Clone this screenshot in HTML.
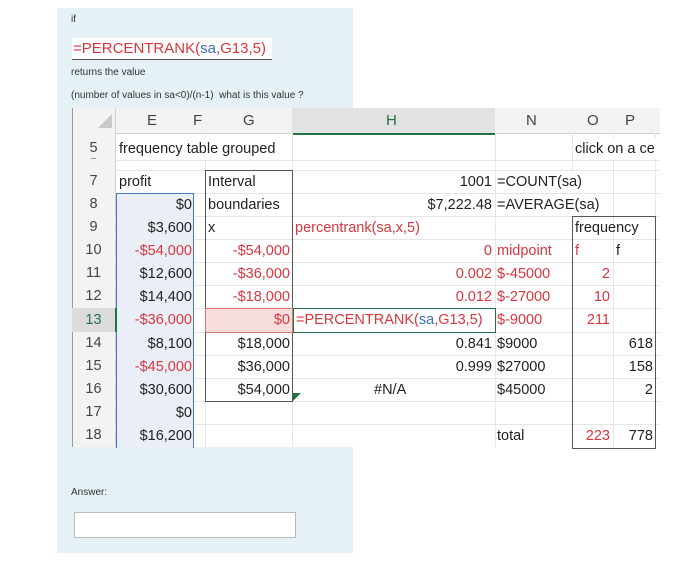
<!DOCTYPE html>
<html><head><meta charset="utf-8"><style>
body{margin:0;width:700px;height:565px;background:#fff;position:relative;overflow:hidden;font-family:"Liberation Sans",sans-serif}
.a{position:absolute;white-space:nowrap}
.c{position:absolute;font-size:14.5px;line-height:22px;color:#222;white-space:nowrap}
.w{background:#fff}
.r{color:#d9363e}
.b{color:#3b6fb6}
.h{position:absolute;height:1px;background:#e6e6e6}
.v{position:absolute;width:1px;background:#e6e6e6}
.rn{position:absolute;left:72px;width:43px;text-align:center;font-size:14.5px;line-height:23px;color:#444}
</style></head><body>
<div class="a" style="left:57px;top:8px;width:296px;height:545px;background:#e6f1f5"></div>
<div class="a" style="left:71px;top:14px;font-size:10px;color:#333">if</div>
<div class="a" style="left:72px;top:38px;width:200px;height:21px;background:#fff;border-bottom:1px solid #555"></div>
<div class="a" style="left:73px;top:38px;font-size:15px;line-height:21px;color:#d9363e">=PERCENTRANK(<span class="b">sa</span>,G13,5)</div>
<div class="a" style="left:71px;top:67px;font-size:10px;color:#333">returns the value</div>
<div class="a" style="left:71px;top:90px;font-size:10px;color:#333">(number of values in sa&lt;0)/(n-1)&nbsp; what is this value ?</div>

<div class="a" style="left:72px;top:108px;width:588px;height:339px;background:#fff"></div>
<div class="a" style="left:72px;top:108px;width:588px;height:25px;background:#f3f3f3;border-bottom:1px solid #d0d0d0"></div>
<div class="a" style="left:72px;top:108px;width:43px;height:339px;background:#f3f3f3;border-right:1px solid #d0d0d0"></div>
<div class="a" style="left:72px;top:108px;width:1px;height:339px;background:#999"></div>
<div class="a" style="left:98px;top:114px;width:0;height:0;border-left:14px solid transparent;border-bottom:14px solid #c8c8c8"></div>
<div class="a" style="left:292px;top:108px;width:203px;height:25px;background:#e2e2e2;border-bottom:2px solid #217346"></div>
<div class="a" style="left:0;top:111px;width:700px;font-size:15px;line-height:20px;color:#444">
<span class="a" style="left:147px">E</span><span class="a" style="left:193px">F</span><span class="a" style="left:243px">G</span><span class="a" style="left:386px;color:#217346">H</span><span class="a" style="left:526px">N</span><span class="a" style="left:587px">O</span><span class="a" style="left:625px">P</span></div>
<div class="h" style="left:115px;top:160px;width:545px"></div>
<div class="h" style="left:115px;top:170px;width:545px"></div>
<div class="h" style="left:115px;top:193px;width:545px"></div>
<div class="h" style="left:115px;top:216px;width:545px"></div>
<div class="h" style="left:115px;top:239px;width:545px"></div>
<div class="h" style="left:115px;top:262px;width:545px"></div>
<div class="h" style="left:115px;top:285px;width:545px"></div>
<div class="h" style="left:115px;top:308px;width:545px"></div>
<div class="h" style="left:115px;top:332px;width:545px"></div>
<div class="h" style="left:115px;top:355px;width:545px"></div>
<div class="h" style="left:115px;top:378px;width:545px"></div>
<div class="h" style="left:115px;top:401px;width:545px"></div>
<div class="h" style="left:115px;top:424px;width:545px"></div>
<div class="v" style="left:205px;top:133px;height:314px"></div>
<div class="v" style="left:292px;top:133px;height:314px"></div>
<div class="v" style="left:495px;top:133px;height:314px"></div>
<div class="v" style="left:572px;top:133px;height:314px"></div>
<div class="v" style="left:613px;top:133px;height:314px"></div>
<div class="v" style="left:655px;top:133px;height:314px"></div>
<div class="a" style="left:116px;top:193px;width:76px;height:254px;background:#e9eef7;border:1px solid #4a7cc0;border-bottom:none"></div>
<div class="a" style="left:205px;top:170px;width:86px;height:230px;border:1px solid #555"></div>
<div class="a" style="left:572px;top:216px;width:82px;height:231px;border:1px solid #555"></div>
<div class="a" style="left:205px;top:308px;width:86px;height:23px;background:#f6dcdc;border:1px solid #d77"></div>
<div class="a" style="left:72px;top:308px;width:43px;height:24px;background:#dcdcdc;border-right:2px solid #217346"></div>
<div class="a" style="left:293px;top:393px;width:0;height:0;border-right:8px solid transparent;border-top:8px solid #217346"></div>
<div class="rn" style="top:137px">5</div>
<div class="rn" style="top:152px;font-size:9px;line-height:12px">&#x2323;</div>
<div class="rn" style="top:170px">7</div><div class="rn" style="top:193px">8</div><div class="rn" style="top:216px">9</div>
<div class="rn" style="top:239px">10</div><div class="rn" style="top:262px">11</div><div class="rn" style="top:285px">12</div>
<div class="rn" style="top:309px;color:#217346">13</div><div class="rn" style="top:332px">14</div><div class="rn" style="top:355px">15</div>
<div class="rn" style="top:378px">16</div><div class="rn" style="top:401px">17</div><div class="rn" style="top:424px">18</div>
<div class="c w" style="left:117px;top:138px;padding-left:2px">frequency table grouped</div>
<div class="c w" style="left:573px;top:138px;padding-left:2px;width:85px">click on a ce</div>
<div class="c" style="left:119px;top:171px">profit</div>
<div class="c" style="left:208px;top:171px">Interval</div>
<div class="c" style="left:208px;top:194px">boundaries</div>
<div class="c" style="left:208px;top:217px">x</div>
<div class="c r w" style="left:293px;top:217px;padding-left:2px">percentrank(sa,x,5)</div>
<div class="c" style="left:575px;top:217px">frequency</div>
<div class="c" style="right:508px;top:194px">$0</div>
<div class="c" style="right:508px;top:217px">$3,600</div>
<div class="c r" style="right:508px;top:240px">-$54,000</div>
<div class="c" style="right:508px;top:263px">$12,600</div>
<div class="c" style="right:508px;top:286px">$14,400</div>
<div class="c r" style="right:508px;top:309px">-$36,000</div>
<div class="c" style="right:508px;top:333px">$8,100</div>
<div class="c r" style="right:508px;top:356px">-$45,000</div>
<div class="c" style="right:508px;top:379px">$30,600</div>
<div class="c" style="right:508px;top:402px">$0</div>
<div class="c" style="right:508px;top:425px">$16,200</div>
<div class="c r" style="right:410px;top:240px">-$54,000</div>
<div class="c r" style="right:410px;top:263px">-$36,000</div>
<div class="c r" style="right:410px;top:286px">-$18,000</div>
<div class="c r" style="right:410px;top:309px">$0</div>
<div class="c" style="right:410px;top:333px">$18,000</div>
<div class="c" style="right:410px;top:356px">$36,000</div>
<div class="c" style="right:410px;top:379px">$54,000</div>
<div class="c" style="right:208px;top:171px">1001</div>
<div class="c" style="right:208px;top:194px">$7,222.48</div>
<div class="c r" style="right:208px;top:240px">0</div>
<div class="c r" style="right:208px;top:263px">0.002</div>
<div class="c r" style="right:208px;top:286px">0.012</div>
<div class="c" style="right:208px;top:333px">0.841</div>
<div class="c" style="right:208px;top:356px">0.999</div>
<div class="c" style="left:374px;top:379px">#N/A</div>
<div class="c w" style="left:496px;top:171px;padding-left:1px;width:116px">=COUNT(sa)</div>
<div class="c w" style="left:496px;top:194px;padding-left:1px;width:116px">=AVERAGE(sa)</div>
<div class="c r" style="left:497px;top:240px">midpoint</div>
<div class="c r" style="left:497px;top:263px">$-45000</div>
<div class="c r" style="left:497px;top:286px">$-27000</div>
<div class="c r" style="left:497px;top:309px">$-9000</div>
<div class="c" style="left:497px;top:333px">$9000</div>
<div class="c" style="left:497px;top:356px">$27000</div>
<div class="c" style="left:497px;top:379px">$45000</div>
<div class="c" style="left:497px;top:425px">total</div>
<div class="c r" style="left:575px;top:240px">f</div>
<div class="c" style="left:616px;top:240px">f</div>
<div class="c r" style="right:90px;top:263px">2</div>
<div class="c r" style="right:90px;top:286px">10</div>
<div class="c r" style="right:90px;top:309px">211</div>
<div class="c r" style="right:90px;top:425px">223</div>
<div class="c" style="right:47px;top:333px">618</div>
<div class="c" style="right:47px;top:356px">158</div>
<div class="c" style="right:47px;top:379px">2</div>
<div class="c" style="right:47px;top:425px">778</div>
<div class="a" style="left:293px;top:308px;width:201px;height:23px;border:1px solid #217346;background:#fff"></div>
<div class="c r" style="left:296px;top:309px">=PERCENTRANK(<span class="b">sa</span>,G13,5)</div>

<div class="a" style="left:71px;top:487px;font-size:10px;color:#333">Answer:</div>
<div class="a" style="left:74px;top:512px;width:220px;height:24px;background:#fff;border:1px solid #bbb"></div>
</body></html>
